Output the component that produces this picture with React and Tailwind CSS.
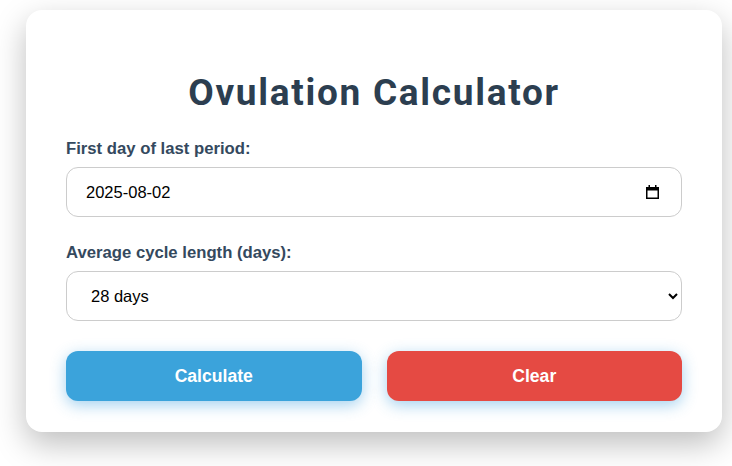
import React, { useState } from 'react';

const CalendarIcon = () => (
  <svg width="13" height="14" viewBox="0 0 13 14" className="block">
    <rect x="0.75" y="2.75" width="11.5" height="10.5" fill="none" stroke="#000" strokeWidth="1.5" />
    <rect x="0" y="2" width="13" height="3.5" fill="#000" />
    <rect x="2.5" y="0" width="1.5" height="3" fill="#000" />
    <rect x="9" y="0" width="1.5" height="3" fill="#000" />
  </svg>
);

const App = () => {
  const [date, setDate] = useState('2025-08-02');
  const [cycle, setCycle] = useState('28');

  const cycleOptions = [];
  for (let d = 21; d <= 35; d++) cycleOptions.push(d);

  return (
    <div className="min-h-[466px] w-[732px] bg-white pt-[10px] pl-[26px] font-['Liberation_Sans',Arial,sans-serif]">
      <div className="w-[696px] rounded-[16px] bg-white px-[40px] pt-[28px] pb-[31px] shadow-[0_12px_32px_rgba(0,0,0,0.26)]">
        <h1 className="mt-[34px] mb-[26px] text-center font-['Roboto',sans-serif] text-[37px] font-bold leading-[42px] tracking-[1.7px] text-[#2c3e50]">
          Ovulation Calculator
        </h1>

        {/* Period date */}
        <label className="mb-[9px] block text-[16.7px] font-bold leading-[18px] text-[#34495e]">
          First day of last period:
        </label>
        <div className="relative">
          <input
            type="text"
            value={date}
            onChange={(e) => setDate(e.target.value)}
            className="block h-[50px] w-full rounded-[12px] border border-[#ccc] bg-white px-[19px] text-[16.5px] text-black outline-none"
          />
          <div className="pointer-events-none absolute right-[23px] top-[18px]">
            <CalendarIcon />
          </div>
        </div>

        {/* Cycle length */}
        <label className="mt-[27px] mb-[9px] block text-[16.7px] font-bold leading-[18px] text-[#34495e]">
          Average cycle length (days):
        </label>
        <select
          value={cycle}
          onChange={(e) => setCycle(e.target.value)}
          className="block h-[50px] w-full rounded-[12px] border border-[#ccc] bg-white pl-[20px] pr-[14px] text-[16.5px] text-black outline-none"
        >
          {cycleOptions.map((d) => (
            <option key={d} value={d}>{d} days</option>
          ))}
        </select>

        {/* Actions */}
        <div className="mt-[30px] grid grid-cols-2 gap-[25px]">
          <button className="h-[50px] rounded-[12px] bg-[#3ba3db] text-[17.6px] font-bold text-white shadow-[0_4px_15px_rgba(52,152,219,0.45)]">
            Calculate
          </button>
          <button className="h-[50px] rounded-[12px] bg-[#e54a43] text-[17.6px] font-bold text-white shadow-[0_4px_15px_rgba(52,152,219,0.45)]">
            Clear
          </button>
        </div>
      </div>
    </div>
  );
};

export default App;
